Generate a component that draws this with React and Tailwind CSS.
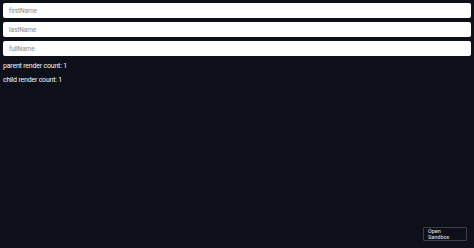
export default function App() {
  return (
    <div className="relative min-h-[248px] bg-[#0e1019] px-[3px] pt-[3px] font-['Roboto',sans-serif] text-white">
      <div className="flex flex-col gap-[4px]">
        {['firstName', 'lastName', 'fullName'].map((p) => (
          <input
            key={p}
            placeholder={p}
            className="h-[15px] w-full rounded-[2px] bg-white px-[6px] text-[6.5px] tracking-[-0.1px] text-gray-900 outline-none placeholder:text-[#8a8a8a]"
          />
        ))}
      </div>
      <p className="mt-[3px] text-[7px] leading-[14px] tracking-[-0.2px] text-gray-100">parent render count: 1</p>
      <p className="text-[7px] leading-[14px] tracking-[-0.2px] text-gray-100">child render count: 1</p>
      <button className="absolute bottom-[7px] right-[7px] flex h-[14px] w-[44px] flex-col justify-center rounded-[1px] border border-[#3a3d48] bg-[#0e1019] px-[4px] text-left text-[5.5px] leading-[6px] text-gray-200">
        <span>Open</span>
        <span>Sandbox</span>
      </button>
    </div>
  );
}
